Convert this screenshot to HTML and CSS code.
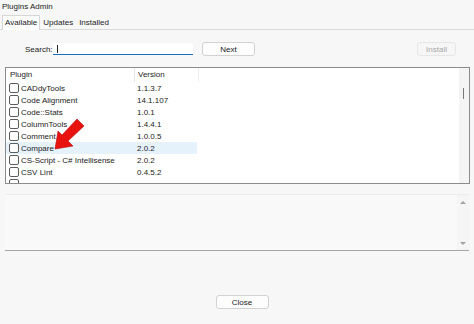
FILE: index.html
```html
<!DOCTYPE html>
<html lang="en">
<head>
    <meta charset="UTF-8">
    <meta name="viewport" content="width=device-width, initial-scale=1.0">
    <title>Plugins Admin</title>
    <link rel="stylesheet" href="styles.css">
</head>
<body>
    <div class="window">
        <div class="title">Plugins Admin</div>
        <div class="tabs">
            <div class="tab active">Available</div>
            <div class="tab">Updates</div>
            <div class="tab">Installed</div>
        </div>

        <div class="search-row">
            <label class="search-label" for="search">Search:</label>
            <div class="search-input" id="search"><span class="caret"></span></div>
            <button class="btn btn-next">Next</button>
            <button class="btn btn-install" disabled>Install</button>
        </div>

        <div class="list">
            <div class="cols">
                <div class="list-head">
                    <div class="cell cell-name">Plugin</div>
                    <div class="cell cell-ver">Version</div>
                </div>
                <div class="list-row"><span class="check"></span><span class="name">CADdyTools</span><span class="ver">1.1.3.7</span></div>
                <div class="list-row"><span class="check"></span><span class="name">Code Alignment</span><span class="ver">14.1.107</span></div>
                <div class="list-row"><span class="check"></span><span class="name">Code::Stats</span><span class="ver">1.0.1</span></div>
                <div class="list-row"><span class="check"></span><span class="name">ColumnTools</span><span class="ver">1.4.4.1</span></div>
                <div class="list-row"><span class="check"></span><span class="name">Comment</span><span class="ver">1.0.0.5</span></div>
                <div class="list-row selected"><span class="check"></span><span class="name">Compare</span><span class="ver">2.0.2</span></div>
                <div class="list-row"><span class="check"></span><span class="name">CS-Script - C# Intellisense</span><span class="ver">2.0.2</span></div>
                <div class="list-row"><span class="check"></span><span class="name">CSV Lint</span><span class="ver">0.4.5.2</span></div>
                <div class="list-row"><span class="check"></span></div>
            </div>
            <div class="vscroll">
                <div class="thumb"></div>
            </div>
        </div>

        <div class="desc">
            <div class="desc-text"></div>
            <div class="desc-scroll">
                <span class="arrow-up"></span>
                <span class="arrow-down"></span>
            </div>
        </div>

        <div class="footer">
            <button class="btn btn-close">Close</button>
        </div>
    </div>

    <svg class="pointer" width="474" height="324" viewBox="0 0 474 324">
        <polygon points="55,149 73,146 68,141 84,126 77,119 62,135 58,131" fill="#e8130f" stroke="#b30a08" stroke-width="0.6" stroke-linejoin="round"/>
    </svg>
</body>
</html>
```

FILE: styles.css
```css
body {
    margin: 0;
    background-color: #f7f7f7;
    font-family: "Liberation Sans", Arial, sans-serif;
    font-size: 8px;
    color: #1b1b1b;
}

.window {
    width: 474px;
    height: 324px;
    display: flex;
    flex-direction: column;
}

.title {
    height: 15px;
    line-height: 13px;
    padding-left: 2px;
    color: #222;
}

.tabs {
    display: flex;
    padding-left: 2px;
    height: 14px;
    border-bottom: 1px solid #dadada;
}

.tab {
    padding: 0 2px;
    line-height: 14px;
    border: 1px solid transparent;
    border-bottom: none;
}

.tab.active {
    background-color: #ffffff;
    border-color: #d6d6d6;
    margin-bottom: -1px;
}

.search-row {
    display: flex;
    align-items: center;
    height: 14px;
    margin-top: 12px;
}

.search-label {
    padding-left: 25px;
    width: 26px;
}

.search-input {
    width: 140px;
    height: 11px;
    margin-left: 2px;
    background-color: #ffffff;
    border-bottom: 1px solid #1c6fc0;
    border-radius: 2px 2px 0 0;
    display: flex;
    align-items: center;
}

.caret {
    width: 1px;
    height: 8px;
    margin-left: 4px;
    background-color: #222;
}

.btn {
    font-family: inherit;
    font-size: 8px;
    height: 14px;
    padding: 0;
    background-color: #fdfdfd;
    color: #1b1b1b;
    border: 1px solid #d2d2d2;
    border-radius: 3px;
}

.btn-next {
    width: 53px;
    margin-left: 9px;
}

.btn-install {
    width: 39px;
    margin-left: auto;
    margin-right: 18px;
    background-color: #f6f6f6;
    border-color: #e6e6e6;
    color: #a7a7a7;
}

.list {
    display: flex;
    height: 115px;
    margin: 11px 4px 0 5px;
    border: 1px solid #8c8c8c;
    background-color: #ffffff;
    overflow: hidden;
}

.cols {
    flex: 1;
}

.list-head {
    display: flex;
    height: 14px;
    line-height: 14px;
}

.cell-name {
    width: 124px;
    padding-left: 4px;
    border-right: 1px solid #e5e5e5;
}

.cell-ver {
    width: 60px;
    padding-left: 3px;
    border-right: 1px solid #eeeeee;
}

.list-row {
    display: flex;
    align-items: center;
    width: 191px;
    height: 12px;
}

.list-row.selected {
    background-color: #e5f1fb;
}

.check {
    width: 8px;
    height: 8px;
    margin-left: 3px;
    border: 1px solid #5c5c5c;
    border-radius: 2px;
    background-color: #ffffff;
}

.name {
    width: 113px;
    margin-left: 2px;
    white-space: nowrap;
}

.ver {
    padding-left: 3px;
}

.vscroll {
    width: 10px;
    background-color: #f4f4f4;
    position: relative;
}

.thumb {
    position: absolute;
    left: 4px;
    top: 20px;
    width: 1px;
    height: 11px;
    background-color: #7a7a7a;
}

.desc {
    display: flex;
    height: 55px;
    margin: 10px 5px 0 5px;
    background-color: #f9f9f9;
    border-top: 1px solid #ececec;
    border-bottom: 1px solid #a5a5a5;
}

.desc-text {
    flex: 1;
}

.desc-scroll {
    width: 12px;
    display: flex;
    flex-direction: column;
    justify-content: space-between;
    align-items: center;
    padding: 6px 0 5px;
    background-color: #f5f5f5;
}

.arrow-up,
.arrow-down {
    width: 0;
    height: 0;
    border-left: 3px solid transparent;
    border-right: 3px solid transparent;
}

.arrow-up {
    border-bottom: 3px solid #a2a2a2;
}

.arrow-down {
    border-top: 3px solid #a2a2a2;
}

.footer {
    display: flex;
    justify-content: center;
    padding-left: 10px;
    margin-top: 44px;
}

.btn-close {
    width: 53px;
}

.pointer {
    position: absolute;
    left: 0;
    top: 0;
    pointer-events: none;
}
```
